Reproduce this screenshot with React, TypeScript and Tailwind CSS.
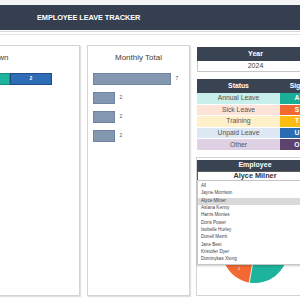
import React from 'react'

const statuses = [
  { label: 'Annual Leave', sign: 'A', bg: 'bg-[#c8efe9]', chip: 'bg-[#1aae96]' },
  { label: 'Sick Leave', sign: 'S', bg: 'bg-[#fde3d8]', chip: 'bg-[#f26a32]' },
  { label: 'Training', sign: 'T', bg: 'bg-[#fff0c9]', chip: 'bg-[#fbbd12]' },
  { label: 'Unpaid Leave', sign: 'U', bg: 'bg-[#dde8f4]', chip: 'bg-[#2c6cb4]' },
  { label: 'Other', sign: 'O', bg: 'bg-[#ddd1e3]', chip: 'bg-[#5c446e]' },
]

const monthly = [7, 2, 2, 2]

const employees = [
  'All',
  'Jayne Morrison',
  'Alyce Milner',
  'Aslana Kenny',
  'Harris Montes',
  'Doris Power',
  'Isobelle Hurley',
  'Donell Merrit',
  'Jane Best',
  'Kristofer Dyer',
  'Dominykas Xiong',
]

function slice(r: number, a0: number, a1: number) {
  const p = (a: number) => {
    const rad = (a * Math.PI) / 180
    return `${(r * Math.sin(rad)).toFixed(2)} ${(-r * Math.cos(rad)).toFixed(2)}`
  }
  const large = a1 - a0 > 180 ? 1 : 0
  return `M0 0 L${p(a0)} A${r} ${r} 0 ${large} 1 ${p(a1)} Z`
}

function Panel({ className, children }: { className: string; children?: React.ReactNode }) {
  return (
    <div
      className={`shrink-0 border border-[#d4d4d4] bg-white shadow-[1px_1px_1px_rgba(0,0,0,0.12)] ${className}`}
    >
      {children}
    </div>
  )
}

export default function App() {
  return (
    <div className="relative h-[300px] w-[300px] overflow-hidden bg-white font-['Liberation_Sans',Arial,sans-serif] text-[#404040]">
      <div className="h-[5px] bg-[#f4f4f4]" />
      <header className="flex h-[25px] items-center bg-[#353f4f] pl-[37px]">
        <span className="text-[7.4px] font-bold tracking-[-0.1px] text-white">EMPLOYEE LEAVE TRACKER</span>
      </header>
      <div className="mt-[1px] h-px bg-[#d6d6d6]" />
      <div className="mt-[2px] h-px bg-[#e4e4e4]" />

      <div className="mt-[10px] flex h-[251px]">
        {/* breakdown chart, mostly off the left edge */}
        <Panel className="ml-[-127px] h-full w-[207px]">
          <div className="mt-[6px] text-center text-[8px]">Leave Breakdown</div>
          <div className="mt-[9px] flex h-[12px] pl-[50px]">
            <div className="h-full w-[86px] border border-[#158f7c] bg-[#1db39c]" />
            <div className="flex h-full w-[42px] items-center justify-center border border-[#1f4f86] bg-[#2e6db5] text-[5px] font-bold text-white">
              2
            </div>
          </div>
        </Panel>

        <Panel className="ml-[7px] h-full w-[103px]">
          <div className="mt-[6px] text-center text-[8px]">Monthly Total</div>
          <div className="mt-[9px] flex flex-col gap-[7px] pl-[5px]">
            {monthly.map((v, i) => (
              <div key={i} className="flex h-[12px] items-center gap-[4px]">
                <div
                  className="h-full border border-[#6e84a1] bg-[#8497b0]"
                  style={{ width: `${v * 11.2}px` }}
                />
                <span className="text-[5px] text-[#555]">{v}</span>
              </div>
            ))}
          </div>
        </Panel>

        <div className="ml-[6px] flex h-full w-[118px] shrink-0 flex-col">
          <div className="ml-[1px] mt-[2px] text-center">
            <div className="flex h-[14px] items-center justify-center bg-[#3a4351] text-[7px] font-bold text-white">Year</div>
            <div className="flex h-[11px] items-center justify-center border border-t-0 border-[#c8c8c8] text-[7px]">
              2024
            </div>
          </div>

          <div className="ml-[1px] mt-[7px] text-[6.8px]">
            <div className="flex h-[14px] bg-[#3a4351] font-bold text-white">
              <div className="flex w-[83px] items-center justify-center">Status</div>
              <div className="flex flex-1 items-center justify-center">Sign</div>
            </div>
            {statuses.map((s) => (
              <div key={s.label} className="flex h-[11.6px] border-b border-white">
                <div className={`flex w-[83px] items-center justify-center text-[#555] ${s.bg}`}>{s.label}</div>
                <div className={`flex flex-1 items-center justify-center font-bold text-white ${s.chip}`}>{s.sign}</div>
              </div>
            ))}
          </div>

          <Panel className="relative mt-[6px] w-full flex-1 shadow-none">
            <div className="mt-[2px]">
              <div className="flex h-[11px] items-center justify-center bg-[#3a4351] text-[7px] font-bold text-white">
                Employee
              </div>
              <div className="flex h-[11px] items-center justify-center border border-[#5a5a5a] text-[7.3px] font-bold text-[#333]">
                Alyce Milner
              </div>
            </div>
            <div className="mt-[34px] flex justify-center">
              <svg width="68" height="68" viewBox="-34 -34 68 68">
                <path d={slice(33, 0, 190)} fill="#1db39c" />
                <path d={slice(33, 190, 300)} fill="#f26a32" />
                <path d={slice(33, 300, 360)} fill="#2e6db5" />
                <path d="M0 0 L-5.7 32.5" stroke="white" strokeWidth="0.8" />
                <text x="-17" y="20" fontSize="4" fill="white" fontFamily="Liberation Sans, Arial, sans-serif">
                  1
                </text>
              </svg>
            </div>

            {/* open slicer dropdown over the pie */}
            <div className="absolute left-0 top-[22px] w-[120px] border border-[#c6c6c6] bg-white pb-[1px] pt-[2px] shadow-[0_1px_2px_rgba(0,0,0,0.2)]">
              {employees.map((e) => (
                <div
                  key={e}
                  className={`flex h-[7.3px] items-center pl-[3px] text-[4.6px] text-[#444] ${
                    e === 'Alyce Milner' ? 'bg-[#d9d9d9]' : ''
                  }`}
                >
                  {e}
                </div>
              ))}
            </div>
          </Panel>
        </div>
      </div>
    </div>
  )
}
